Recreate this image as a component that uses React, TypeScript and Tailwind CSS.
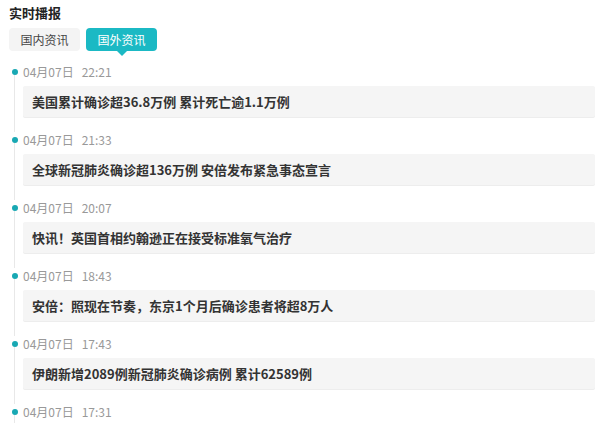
import React, { useState } from 'react';

const news = [
  { date: '04月07日', time: '22:21', title: '美国累计确诊超36.8万例 累计死亡逾1.1万例' },
  { date: '04月07日', time: '21:33', title: '全球新冠肺炎确诊超136万例 安倍发布紧急事态宣言' },
  { date: '04月07日', time: '20:07', title: '快讯！英国首相约翰逊正在接受标准氧气治疗' },
  { date: '04月07日', time: '18:43', title: '安倍：照现在节奏，东京1个月后确诊患者将超8万人' },
  { date: '04月07日', time: '17:43', title: '伊朗新增2089例新冠肺炎确诊病例 累计62589例' },
  { date: '04月07日', time: '17:31', title: '' },
];

const App: React.FC = () => {
  const [tab, setTab] = useState(1);
  const tabs = ['国内资讯', '国外资讯'];

  return (
    <div
      className="w-[600px] h-[423px] overflow-hidden bg-white text-[#333]"
      style={{ fontFamily: '"Microsoft YaHei", "Noto Sans CJK SC", sans-serif' }}
    >
      <div className="pl-[9px] pr-[5px] pt-[3px]">
        <h2 className="text-[13px] font-bold leading-[20px] text-[#222]">实时播报</h2>
        <div className="flex gap-[6px] mt-[5px]">
          {tabs.map((t, i) => (
            <button
              key={t}
              onClick={() => setTab(i)}
              className={
                'relative h-[23px] w-[71px] rounded-[4px] text-[12px] leading-[23px] ' +
                (tab === i ? 'bg-[#1bb9c4] text-white' : 'bg-[#f4f4f4] text-[#444]')
              }
            >
              {t}
              {tab === i && (
                <span className="absolute left-1/2 -translate-x-1/2 top-full w-0 h-0 border-l-[5px] border-r-[5px] border-t-[5px] border-l-transparent border-r-transparent border-t-[#1bb9c4]" />
              )}
            </button>
          ))}
        </div>

        <div className="mt-[13px]">
          {news.map((n, i) => (
            <div key={i} className="flex">
              <div className="w-[14px] flex flex-col items-center shrink-0">
                <span className="mt-[5px] w-[6px] h-[6px] rounded-full bg-[#18a8b3] ml-[-3px]" />
                <span className="flex-1 w-px bg-[#e8e8e8] ml-[-3px]" />
              </div>
              <div className="flex-1 pb-[15px]">
                <div className="text-[12px] leading-[16px] text-[#999]">
                  {n.date}
                  <span className="ml-[8px]">{n.time}</span>
                </div>
                {n.title && (
                  <div className="mt-[6px] h-[31px] bg-[#f5f5f5] rounded-[2px] px-[9px] text-[13px] font-bold leading-[31px] text-[#333] shadow-[0_1px_0_#ededed]">
                    {n.title}
                  </div>
                )}
              </div>
            </div>
          ))}
        </div>
      </div>
    </div>
  );
};

export default App;
